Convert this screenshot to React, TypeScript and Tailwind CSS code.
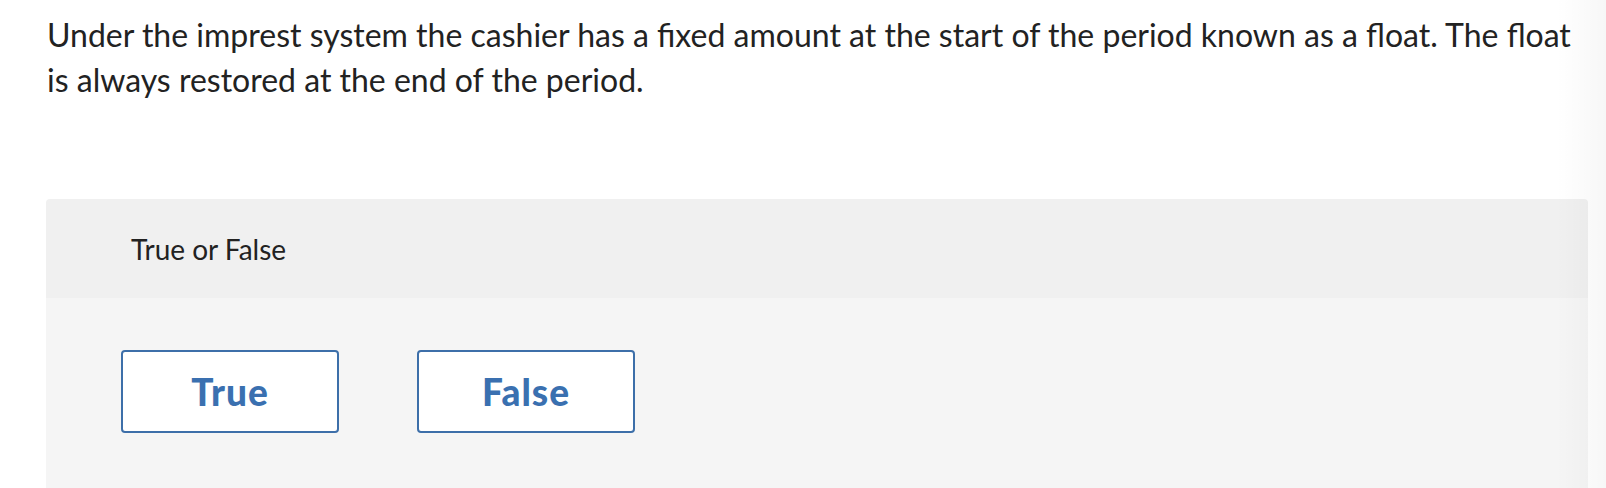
export default function App() {
  return (
    <div
      className="relative w-[1606px] h-[488px] overflow-hidden bg-white text-[#222222]"
      style={{ fontFamily: 'Lato, "Open Sans", sans-serif' }}
    >
      <p className="pl-[47px] pt-[12px] w-[1578px] text-[32px] leading-[45px]">
        Under the imprest system the cashier has a fixed amount at the start of the period known as a float. The float
        is always restored at the end of the period.
      </p>

      <div className="mt-[97px] ml-[46px] w-[1542px] rounded-t-[4px] overflow-hidden">
        <div className="h-[99px] bg-[#f0f0f0] flex items-center pl-[85px] text-[28px]">True or False</div>
        <div className="h-[200px] bg-[#f5f5f5] pt-[52px] pl-[75px] flex gap-[78px]">
          {['True', 'False'].map((label) => (
            <button
              key={label}
              className="w-[218px] h-[83px] bg-white border-2 border-[#3d6fa9] rounded-[4px] text-[37px] font-black tracking-[1px] text-[#3a70b0]"
            >
              {label}
            </button>
          ))}
        </div>
      </div>

      <div className="absolute top-0 right-0 w-[50px] h-full bg-gradient-to-r from-transparent to-[#00000008] pointer-events-none" />
    </div>
  );
}
